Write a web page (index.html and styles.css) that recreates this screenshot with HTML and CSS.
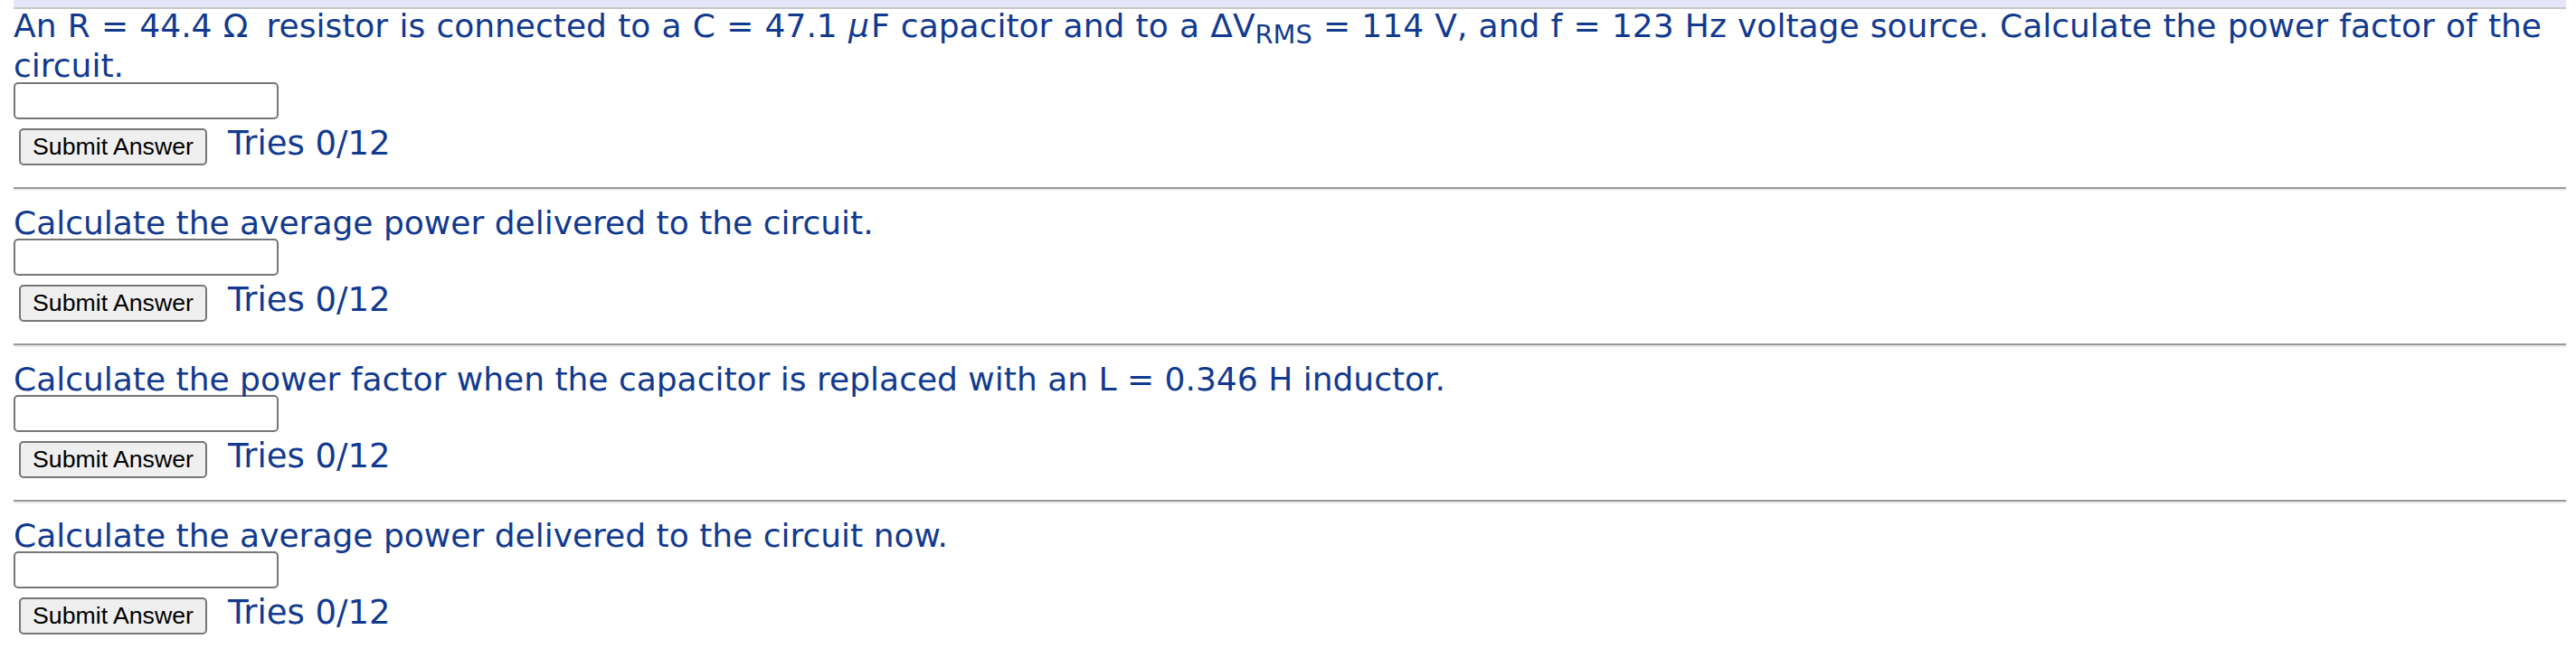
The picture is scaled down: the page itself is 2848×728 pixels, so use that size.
FILE: index.html
```html
<!DOCTYPE html>
<html>
<head>
<meta charset="utf-8">
<link rel="stylesheet" href="styles.css">
</head>
<body>
<div class="page">
  <div class="band"></div>

  <section class="q q-first">
    <div class="qtext"><span>An R = 44.4 <span class="ohm">Ω</span> resistor is connected to a C = 47.1 <i>μ</i>F capacitor and to a ΔV<sub>RMS</sub> = 114 V, and f = 123 Hz voltage source. Calculate the power factor of the</span> <span>circuit.</span></div>
    <input class="answer" type="text">
    <div class="row"><button class="submit" type="button">Submit Answer</button><span class="tries">Tries 0/12</span></div>
  </section>
  <hr class="sep">

  <section class="q">
    <div class="qtext">Calculate the average power delivered to the circuit.</div>
    <input class="answer" type="text">
    <div class="row"><button class="submit" type="button">Submit Answer</button><span class="tries">Tries 0/12</span></div>
  </section>
  <hr class="sep">

  <section class="q">
    <div class="qtext">Calculate the power factor when the capacitor is replaced with an L = 0.346 H inductor.</div>
    <input class="answer" type="text">
    <div class="row"><button class="submit" type="button">Submit Answer</button><span class="tries">Tries 0/12</span></div>
  </section>
  <hr class="sep">

  <section class="q">
    <div class="qtext">Calculate the average power delivered to the circuit now.</div>
    <input class="answer" type="text">
    <div class="row"><button class="submit" type="button">Submit Answer</button><span class="tries">Tries 0/12</span></div>
  </section>
</div>
</body>
</html>
```
FILE: styles.css
```css
html, body {
  margin: 0;
  padding: 0;
  background: #ffffff;
}

.page {
  margin: 0 11px 0 15px;
  font-family: "DejaVu Sans", Verdana, sans-serif;
  color: #113a8f;
}

.band {
  height: 8px;
  background: #e6e6fa;
  border-bottom: 2px solid #c8c8c8;
}

.qtext {
  font-size: 36px;
  line-height: 42px;
}

.q-first .qtext {
  margin-top: -3.5px;
  line-height: 44px;
  word-spacing: 0.8px;
}

.qtext .ohm {
  margin-right: 8px;
}

.qtext i {
  padding-right: 2px;
}

.qtext sub {
  font-size: 28.8px;
  line-height: 0;
  vertical-align: -7px;
}

.answer {
  display: block;
  box-sizing: border-box;
  width: 293px;
  height: 41px;
  margin: -3.5px 0 0 0;
  border: 2px solid #767676;
  border-radius: 5px;
  background: #fff;
}

.row {
  display: flex;
  align-items: baseline;
  margin-top: 9px;
}

.submit {
  box-sizing: border-box;
  width: 208px;
  height: 41px;
  margin: 0 0 0 6px;
  padding: 0;
  font-family: "Liberation Sans", Arial, sans-serif;
  font-size: 26.67px;
  color: #000;
  background: #efefef;
  border: 2px solid #767676;
  border-radius: 5px;
}

.tries {
  margin-left: 23px;
  font-size: 37px;
  line-height: 35px;
}

.sep {
  margin: 24px 0 14.5px 0;
  height: 0;
  border: 0;
  border-top: 2px solid #9a9a9a;
  border-bottom: 2px solid #ececec;
}
```
